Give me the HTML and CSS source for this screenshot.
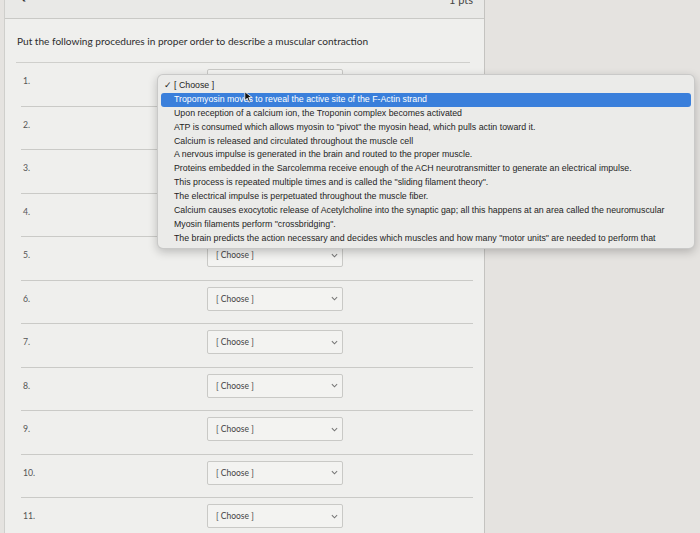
FILE: index.html
```html
<!DOCTYPE html>
<html>
<head>
<meta charset="utf-8">
<link rel="stylesheet" href="styles.css">
</head>
<body>
<div class="page">
  <div class="card">
    <div class="card-header">
      <span class="qtitle">Question 3</span>
      <span class="pts">1 pts</span>
    </div>
    <div class="card-body">
      <p class="prompt">Put the following procedures in proper order to describe a muscular contraction</p>
      <div class="rows">
        <div class="row"><span class="num">1.</span><div class="select covered"><span>[ Choose ]</span><svg class="chev" viewBox="0 0 8 5"><path d="M1 1l3 3 3-3" fill="none" stroke="#777" stroke-width="1.2"/></svg></div></div>
        <div class="row"><span class="num">2.</span><div class="select covered"><span>[ Choose ]</span><svg class="chev" viewBox="0 0 8 5"><path d="M1 1l3 3 3-3" fill="none" stroke="#777" stroke-width="1.2"/></svg></div></div>
        <div class="row"><span class="num">3.</span><div class="select covered"><span>[ Choose ]</span><svg class="chev" viewBox="0 0 8 5"><path d="M1 1l3 3 3-3" fill="none" stroke="#777" stroke-width="1.2"/></svg></div></div>
        <div class="row"><span class="num">4.</span><div class="select covered"><span>[ Choose ]</span><svg class="chev" viewBox="0 0 8 5"><path d="M1 1l3 3 3-3" fill="none" stroke="#777" stroke-width="1.2"/></svg></div></div>
        <div class="row"><span class="num">5.</span><div class="select"><span>[ Choose ]</span><svg class="chev" viewBox="0 0 8 5"><path d="M1 1l3 3 3-3" fill="none" stroke="#777" stroke-width="1.2"/></svg></div></div>
        <div class="row"><span class="num">6.</span><div class="select"><span>[ Choose ]</span><svg class="chev" viewBox="0 0 8 5"><path d="M1 1l3 3 3-3" fill="none" stroke="#777" stroke-width="1.2"/></svg></div></div>
        <div class="row"><span class="num">7.</span><div class="select"><span>[ Choose ]</span><svg class="chev" viewBox="0 0 8 5"><path d="M1 1l3 3 3-3" fill="none" stroke="#777" stroke-width="1.2"/></svg></div></div>
        <div class="row"><span class="num">8.</span><div class="select"><span>[ Choose ]</span><svg class="chev" viewBox="0 0 8 5"><path d="M1 1l3 3 3-3" fill="none" stroke="#777" stroke-width="1.2"/></svg></div></div>
        <div class="row"><span class="num">9.</span><div class="select"><span>[ Choose ]</span><svg class="chev" viewBox="0 0 8 5"><path d="M1 1l3 3 3-3" fill="none" stroke="#777" stroke-width="1.2"/></svg></div></div>
        <div class="row"><span class="num">10.</span><div class="select"><span>[ Choose ]</span><svg class="chev" viewBox="0 0 8 5"><path d="M1 1l3 3 3-3" fill="none" stroke="#777" stroke-width="1.2"/></svg></div></div>
        <div class="row"><span class="num">11.</span><div class="select"><span>[ Choose ]</span><svg class="chev" viewBox="0 0 8 5"><path d="M1 1l3 3 3-3" fill="none" stroke="#777" stroke-width="1.2"/></svg></div></div>
      </div>
    </div>
  </div>
  <div class="side"></div>

  <ul class="menu">
    <li class="opt checked"><span class="check">✓</span>[ Choose ]</li>
    <li class="opt active">Tropomyosin moves to reveal the active site of the F-Actin strand</li>
    <li class="opt">Upon reception of a calcium ion, the Troponin complex becomes activated</li>
    <li class="opt">ATP is consumed which allows myosin to "pivot" the myosin head, which pulls actin toward it.</li>
    <li class="opt">Calcium is released and circulated throughout the muscle cell</li>
    <li class="opt">A nervous impulse is generated in the brain and routed to the proper muscle.</li>
    <li class="opt">Proteins embedded in the Sarcolemma receive enough of the ACH neurotransmitter to generate an electrical impulse.</li>
    <li class="opt">This process is repeated multiple times and is called the "sliding filament theory".</li>
    <li class="opt">The electrical impulse is perpetuated throughout the muscle fiber.</li>
    <li class="opt">Calcium causes exocytotic release of Acetylcholine into the synaptic gap; all this happens at an area called the neuromuscular</li>
    <li class="opt">Myosin filaments perform "crossbridging".</li>
    <li class="opt">The brain predicts the action necessary and decides which muscles and how many "motor units" are needed to perform that</li>
  </ul>

  <svg class="cursor" viewBox="0 0 10 15"><path d="M1 1v11l3-3 2 5 2-1-2-5h4z" fill="#111" stroke="#fff" stroke-width="1"/></svg>
</div>
</body>
</html>
```

FILE: styles.css
```css
* { box-sizing: border-box; }
html, body { margin: 0; padding: 0; }
body {
  width: 700px;
  height: 533px;
  overflow: hidden;
  background: #e5e3e0;
  font-family: Lato, "Open Sans", sans-serif;
}
.page {
  position: relative;
  display: flex;
  width: 700px;
  height: 533px;
  padding-left: 4px;
}
.card {
  width: 481px;
  height: 533px;
  background: #efefed;
  border-left: 1px solid #cfcfcc;
  border-right: 1px solid #c4c3c0;
  flex: none;
}
.card-header {
  height: 19px;
  background: #e9e9e7;
  border-bottom: 1px solid #c9c9c6;
  display: flex;
  justify-content: space-between;
  align-items: flex-start;
  padding: 0 11px 0 11px;
  overflow: hidden;
}
.qtitle {
  font-weight: 700;
  font-size: 12px;
  color: #333;
  margin-top: -12px;
}
.pts {
  font-size: 11px;
  color: #444;
  margin-top: -7px;
}
.card-body {
  padding: 0 12px 0 11px;
}
.prompt {
  margin: 0;
  padding: 16px 0 14px 1px;
  font-size: 10.1px;
  line-height: 13px;
  color: #2d2d2d;
  border-bottom: 1px solid #cfcfcc;
  width: 454px;
}
.rows {
  margin-left: 5px;
  width: 452px;
}
.row {
  height: 43.5px;
  border-bottom: 1px solid #cacac7;
  display: flex;
  align-items: flex-start;
  padding-top: 6px;
}
.num {
  width: 186px;
  flex: none;
  padding-left: 2px;
  padding-top: 6px;
  font-size: 8.7px;
  line-height: 12px;
  color: #555;
}
.select {
  width: 136px;
  height: 24px;
  border: 1px solid #c9c9c6;
  border-radius: 2px;
  background: #f3f3f1;
  display: flex;
  align-items: center;
  justify-content: space-between;
  padding: 0 4px 0 8px;
  font-size: 8.5px;
  color: #444;
}
.select.covered span { visibility: hidden; }
.chev { width: 7px; height: 5px; }
.side { flex: 1; }

.menu {
  position: absolute;
  left: 157px;
  top: 74px;
  width: 538px;
  margin: 0;
  padding: 4px 3px 2px 3px;
  list-style: none;
  background: #ebebe9;
  border: 1px solid rgba(0,0,0,0.14);
  border-radius: 6px;
  box-shadow: 0 3px 10px rgba(0,0,0,0.22);
  font-family: "Liberation Sans", Arial, sans-serif;
  font-size: 8.8px;
  color: #1e1e1e;
}
.opt {
  height: 13.9px;
  line-height: 13.9px;
  padding-left: 13px;
  white-space: nowrap;
  overflow: hidden;
  border-radius: 3px;
}
.opt.checked { position: relative; }
.check {
  position: absolute;
  left: 3px;
  font-size: 8.5px;
}
.opt.active {
  background: #3a7fdb;
  color: #fff;
}
.cursor {
  position: absolute;
  left: 244px;
  top: 91px;
  width: 8px;
  height: 12px;
}
```
